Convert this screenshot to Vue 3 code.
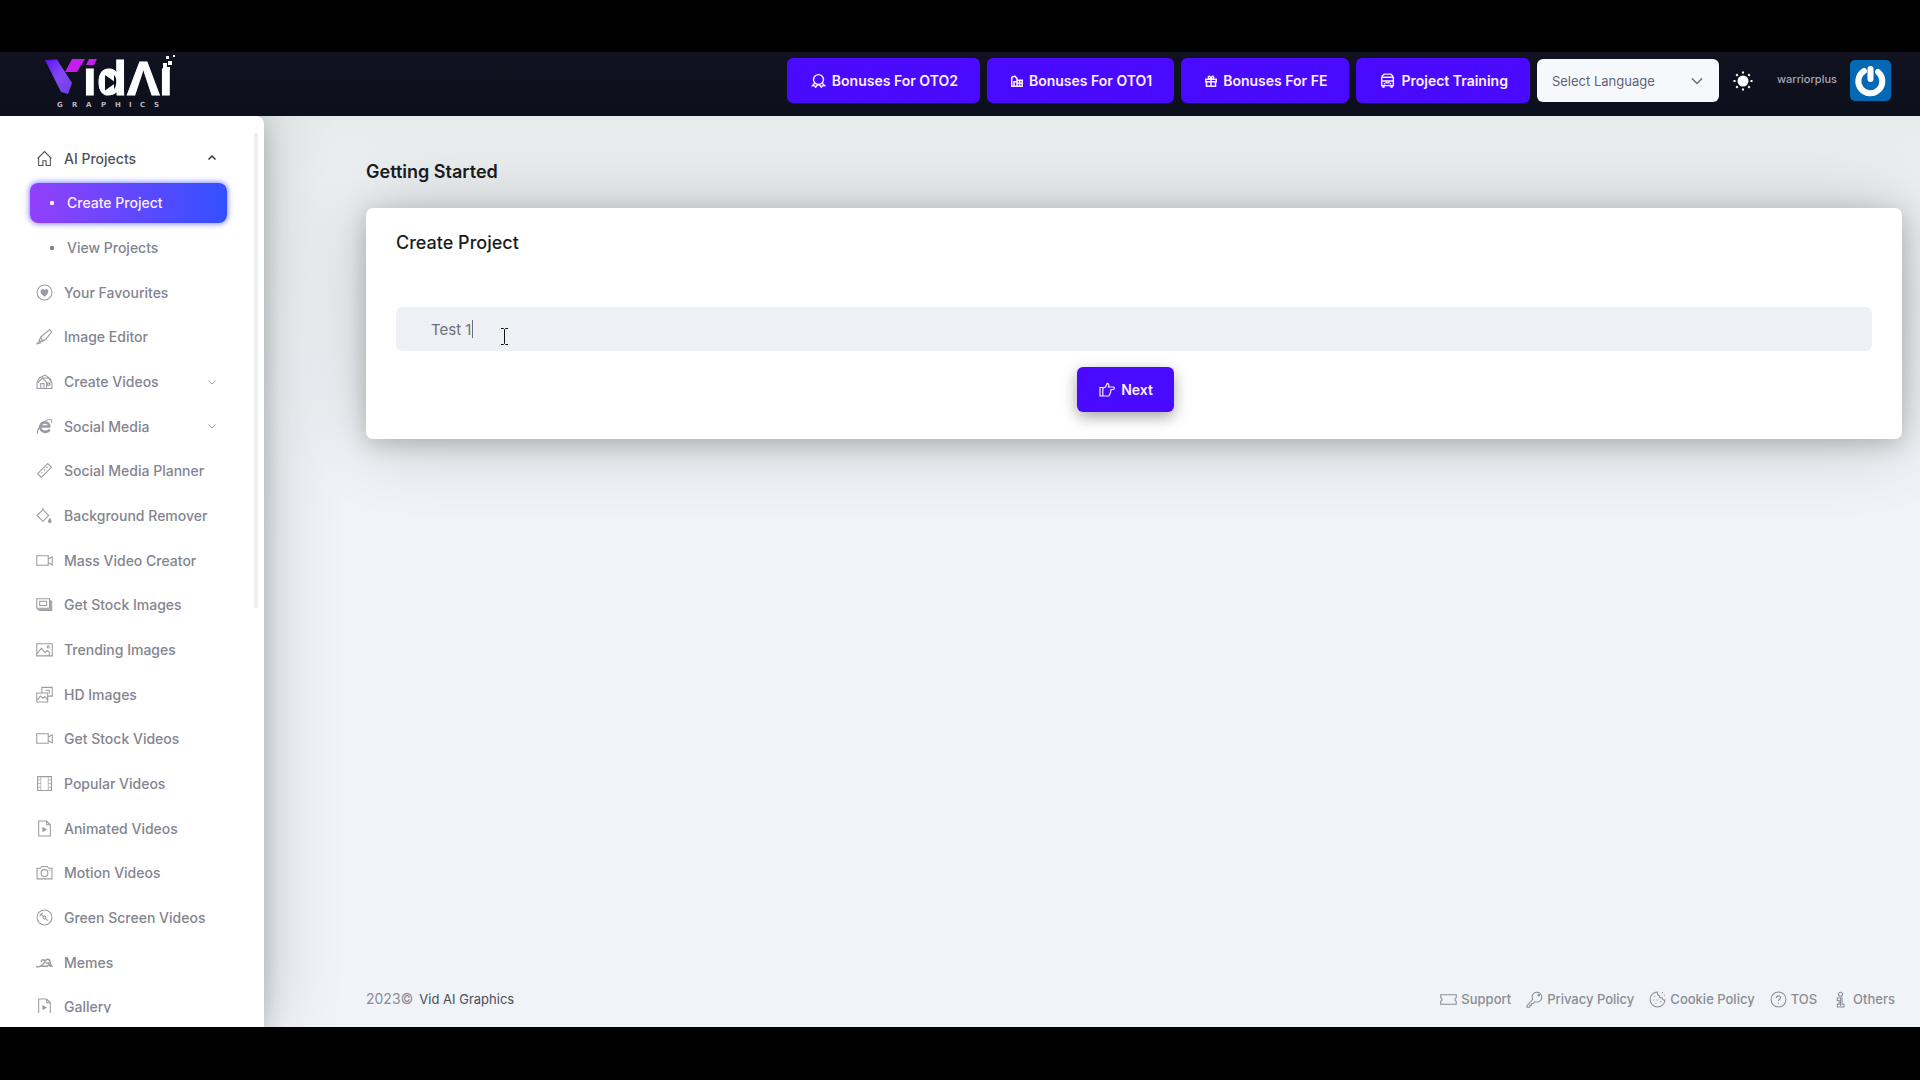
<script setup>
import { ref } from 'vue';

const projectName = ref('Test 1');
const language = ref('');

const icons = {
  house: '<path d="M1.5 8 8 1.5 14.5 8M2.5 7.2v7.3h4v-4.3h3v4.3h4V7.2"/>',
  heart: '<circle cx="8" cy="8" r="7"/><path class="fill" d="M8 12C2.5 8.5 4.3 4.8 6.3 4.8 7.3 4.8 8 5.8 8 5.8s.7-1 1.7-1C11.7 4.8 13.5 8.5 8 12z"/>',
  brush: '<path d="M13 1.5 14.8 3.5 9 11 5.5 11.5 4.5 8.5zM4.5 8.5 3 11.5 5 13 8 11.5M3.5 12 1 14.8 4 14.2z"/>',
  houses: '<path d="M1 14.5V8.5L3.5 4.5 8.5 2l5 3.5 1.5 4v5zM2 9l4-4.5L10 9v5.5M4.5 14V10h3v4M6 4.5l6 .5 2.5 4M11 9.5h2v2h-2z"/>',
  browser: '<path stroke-width="2.4" d="M13 11C9.5 15 3.5 12.5 4 8 4.8 2.8 12.5 3 12.5 8H5"/><path d="M2 14.5C-1 13 7 1 14 1.5c1.2.4 1 2 .5 3"/>',
  ruler: '<path d="M11 1.5 14.5 5 5 14.5 1.5 11zM10 4.5l1 1M7.5 7l1 1M5 9.5l1 1"/>',
  bucket: '<path d="M6.5 2.5 12 8l-5.5 5.5L1 8zM6.5 2.5V1"/><path class="fill" d="M13 10c1 1.5 1.7 2.5 1.7 3.5a1.7 1.7 0 0 1-3.4 0c0-1 .7-2 1.7-3.5z"/>',
  video: '<path d="M.7 3.5h10.8v9H.7zM11.5 6.5l3.8-2v7.5l-3.8-2"/>',
  stack: '<path d="M.7 2.5h12v9h-12zM3.5 5h6.5v4H3.5zM2.5 13.5h12.3V4.5"/><path d="M1 12.5h12.8V3.5"/>',
  image: '<path d="M.7 2.5h14.6v11.5H.7zM1 12l4-5 3.5 4 2-2 2 1.5v3"/><circle cx="11.5" cy="5.5" r="1"/>',
  images: '<path d="M.7 6.5h10.3v8.5H.7zM1.5 13l2.5-3.5 2.5 2 2-1.5 2 2.5M5.5 6.5V1.3h9.8v8.2H11"/><path d="M9 4h3.5v3"/>',
  film: '<path d="M1.5 1.5h13v13h-13z"/><path stroke-width=".6" d="M4.5 1.5v13M11.5 1.5v13M1.5 4.5h3M1.5 8h3M1.5 11.5h3M11.5 4.5h3M11.5 8h3M11.5 11.5h3"/>',
  filePlay: '<path d="M2.5 1h7.5l3.5 3.5V15h-11zM10 1v3.5h3.5"/><path class="fill" d="M6 6.5 10.5 9 6 11.5z"/>',
  camera: '<path d="M1 4h3l1.5-1.7h5L12 4h3v10H1z"/><circle cx="8" cy="8.5" r="3.2"/><path d="M12.5 6h1"/>',
  disc: '<circle cx="8" cy="8" r="7"/><circle cx="8" cy="8" r="1.3"/><path d="M3.5 7A4.5 4.5 0 0 1 6.5 3.7M5 5l2 2M9 9l2 2"/>',
  people: '<path stroke-width="1.4" d="M0 11.5c2 1.5 3 .5 5-.5M5 7.5c0-3 4-2.5 3.5 0-.5 1.5-3 2-3.5 4h5M9 7c0-3 4-2.5 4 0 0 2 .5 3 2.5 5M9.5 8.5h3M10 12l2-2 2 2"/>',
  award: '<circle cx="8" cy="7" r="5.3"/><path d="M4 11 1.5 13.5l2.5.2L5 15.2l2-2.5h2l2 2.5 1-1.5 2.5-.2L12 11"/>',
  building: '<path d="M1 15V3l4-1.5L8 4.5V7h7v8zM4 15V9h4M8 7v8M8 11h7M11.5 7.5v7"/>',
  gift: '<path d="M1 5.5h14V9H1zM2 9v6h12V9M8 5.5v9.5M8 5.5C4 5.5 3.5 1.5 6 1.5c1.5.3 2 4 2 4s.5-3.7 2-4c2.5 0 2 4-2 4"/>',
  train: '<path d="M4.5 1.2h7L13.5 3l.7 2v8.5H1.8V5l.7-2zM2 4.5h12M2 8.5h12M6.5 8.5v2h3v-2M4 11.5h1.5M10.5 11.5H12M3 13.5V15h2M13 13.5V15h-2"/>',
  hand: '<path d="M1 5.5h2.8v8.5H1zM3.8 6.2 6.5 5 8 1.5c1.8-.4 2.2 1.5 1.5 3.5h5c1.2.3 1 2.2-.2 2.5H12l-.3 2.2-.8 2.2-1 2.1H3.8"/>',
  ticket: '<path d="M.7 3.5h14.6v2.8a1.8 1.8 0 0 0 0 3.4v2.8H.7V9.7a1.8 1.8 0 0 0 0-3.4z"/>',
  key: '<path d="M6.3 8A4.6 4.6 0 1 1 8.5 10L6.5 12H5v1.5H3.5v1.8H1V13.5z"/><circle cx="12" cy="4" r=".7"/>',
  cookie: '<path d="M8 1a7 7 0 1 0 7 7.5c-1.5.3-2.5-.5-2.5-2C10.5 7 9.5 5.5 10 4.5 8.5 4.5 7.5 2.5 8 1z"/><path d="M5 5h1M4 8.5h1M7 8.5h1M6 11.5h1M10.5 10h1M12 1.5h1M14 4h1"/>',
  question: '<circle cx="8" cy="8" r="7"/><path d="M6 6.5c0-2.5 4-2.5 4-.2C10 7.8 8 7.7 8 9.5M8 11v1"/>',
  info: '<circle cx="8" cy="3" r="1.9"/><path d="M5 6.5h4.5v6h1.7V15H5v-2.5h1.7V9H5zM8 7v7"/>',
};

const topButtons = [
  { label: 'Bonuses For OTO2', icon: 'award' },
  { label: 'Bonuses For OTO1', icon: 'building', small: true },
  { label: 'Bonuses For FE', icon: 'gift', small: true },
  { label: 'Project Training', icon: 'train' },
];

const menu = [
  { label: 'AI Projects', icon: 'house', open: true, arrow: true },
  { label: 'Create Project', sub: true, active: true },
  { label: 'View Projects', sub: true },
  { label: 'Your Favourites', icon: 'heart' },
  { label: 'Image Editor', icon: 'brush' },
  { label: 'Create Videos', icon: 'houses', arrow: true },
  { label: 'Social Media', icon: 'browser', arrow: true },
  { label: 'Social Media Planner', icon: 'ruler' },
  { label: 'Background Remover', icon: 'bucket' },
  { label: 'Mass Video Creator', icon: 'video' },
  { label: 'Get Stock Images', icon: 'stack' },
  { label: 'Trending Images', icon: 'image' },
  { label: 'HD Images', icon: 'images' },
  { label: 'Get Stock Videos', icon: 'video' },
  { label: 'Popular Videos', icon: 'film' },
  { label: 'Animated Videos', icon: 'filePlay' },
  { label: 'Motion Videos', icon: 'camera' },
  { label: 'Green Screen Videos', icon: 'disc' },
  { label: 'Memes', icon: 'people' },
  { label: 'Gallery', icon: 'filePlay' },
];

const footerLinks = [
  { label: 'Support', icon: 'ticket' },
  { label: 'Privacy Policy', icon: 'key' },
  { label: 'Cookie Policy', icon: 'cookie' },
  { label: 'TOS', icon: 'question' },
  { label: 'Others', icon: 'info' },
];
</script>

<template>
  <div class="page">
    <header class="topbar">
      <a href="#" class="logo" aria-label="VidAi Graphics">
        <svg viewBox="44 54 134 56">
          <defs>
            <linearGradient id="mark" x1="0" y1="0" x2="1" y2="1">
              <stop offset="0" stop-color="#5a12f5" />
              <stop offset="0.5" stop-color="#8448f2" />
              <stop offset="1" stop-color="#6a3fe8" />
            </linearGradient>
          </defs>
          <path fill="url(#mark)" d="M45 60 57 59.5 65 72 72 83 68 94 61 92z" />
          <path fill="#c41df0" d="M72 59h13l-8 13H65z" />
          <path fill="#c41df0" d="M89 59h8l-3 6h-8z" />
          <g class="logo-word">
            <text x="83" y="95">ı</text>
            <text x="97" y="95">d</text>
            <text x="127" y="95">Λ</text>
            <text x="159" y="95">ı</text>
          </g>
          <path fill="#fff" d="M103 74h11v18h-11z" />
          <path fill="#10101f" d="M105 75l11 7.7-11 7.7z" />
          <path fill="#fff" d="M163 63h4v4h3v3h-7zM168 61h4v4h-4zM166 56h3v3h-3zM173 55h2v2h-2z" />
          <text class="logo-sub" y="107" x="57 72 86 101 115 129 140 154">GRAPHICS</text>
        </svg>
      </a>
      <div class="tools">
        <button v-for="b in topButtons" :key="b.label" type="button" class="btn" :class="{ small: b.small }">
          <svg class="icon" viewBox="0 0 16 16" v-html="icons[b.icon]"></svg>
          {{ b.label }}
        </button>
        <div class="language">
          <select v-model="language" aria-label="Select Language">
            <option value="">Select Language</option>
          </select>
          <svg class="chevron" viewBox="0 0 12 12"><path d="M1 3.5 6 8.5 11 3.5" /></svg>
        </div>
        <button type="button" class="theme" aria-label="Theme">
          <svg viewBox="0 0 20 20">
            <circle cx="10" cy="10" r="5.5" />
            <g class="rays">
              <path d="M10 .5v2M10 17.5v2M.5 10h2M17.5 10h2M3.3 3.3l1.4 1.4M15.3 15.3l1.4 1.4M3.3 16.7l1.4-1.4M15.3 4.7l1.4-1.4" />
            </g>
          </svg>
        </button>
        <span class="user">warriorplus</span>
        <a href="#" class="avatar" aria-label="Profile">
          <svg viewBox="0 0 41 41">
            <path d="M14 11a12 12 0 1 0 14 1M20.5 9v10" />
          </svg>
        </a>
      </div>
    </header>

    <div class="body">
      <aside class="sidebar">
        <nav class="scroll">
          <ul class="menu">
            <li v-for="item in menu" :key="item.label">
              <a href="#" :class="{ sub: item.sub, active: item.active, open: item.open }">
                <span v-if="item.sub" class="bullet"></span>
                <svg v-else class="icon" viewBox="0 0 16 16" v-html="icons[item.icon]"></svg>
                <span class="label">{{ item.label }}</span>
                <svg v-if="item.arrow" class="arrow" viewBox="0 0 12 12"><path d="M2.5 4.5 6 8 9.5 4.5" /></svg>
              </a>
            </li>
          </ul>
        </nav>
        <div class="scrollbar"></div>
      </aside>

      <main class="main">
        <h1>Getting Started</h1>
        <section class="card">
          <h2>Create Project</h2>
          <form @submit.prevent>
            <div class="field">
              <input v-model="projectName" type="text" aria-label="Project name" />
              <span class="caret"></span>
              <svg class="ibeam" viewBox="0 0 9 17"><path d="M1 .5h2.5l1 1 1-1H8M4.5 1.5v14M1 16.5h2.5l1-1 1 1H8" /></svg>
            </div>
            <div class="actions">
              <button type="submit" class="btn next">
                <svg class="icon" viewBox="0 0 16 16" v-html="icons.hand"></svg>
                Next
              </button>
            </div>
          </form>
        </section>

        <footer class="footer">
          <p><span>2023©</span> <a href="#">Vid AI Graphics</a></p>
          <ul>
            <li v-for="link in footerLinks" :key="link.label">
              <a href="#">
                <svg class="icon" viewBox="0 0 16 16" v-html="icons[link.icon]"></svg>
                {{ link.label }}
              </a>
            </li>
          </ul>
        </footer>
      </main>
    </div>
  </div>
</template>

<style>
body {
  margin: 0;
  background: #000;
}
.icon {
  flex: none;
  fill: none;
  stroke: currentColor;
  stroke-width: 1;
}
.icon .fill {
  fill: currentColor;
  stroke: none;
}
</style>

<style scoped>
.page {
  box-sizing: border-box;
  display: flex;
  flex-direction: column;
  height: 100vh;
  padding: 52px 0 53px;
  background: #000;
  font-family: Inter, 'Liberation Sans', sans-serif;
}
ul {
  list-style: none;
  margin: 0;
  padding: 0;
}
a {
  color: inherit;
  text-decoration: none;
}
button,
input,
select {
  font-family: inherit;
}

.topbar {
  display: flex;
  flex: none;
  justify-content: space-between;
  height: 64px;
  padding: 0 29px 0 44px;
  background: linear-gradient(#121221, #0c0f1c);
}
.logo svg {
  display: block;
  width: 134px;
  height: 56px;
  margin-top: 2px;
  overflow: visible;
}
.logo-word {
  fill: #fff;
  stroke: #fff;
  stroke-width: 1;
  font: bold 49px 'Liberation Sans', Arial, sans-serif;
}
.logo-sub {
  fill: #b9b9c4;
  font: bold 7px 'DejaVu Sans', sans-serif;
}
.tools {
  display: flex;
  align-items: center;
  gap: 7px;
  margin-bottom: 7px;
}
.btn {
  display: flex;
  align-items: center;
  gap: 6px;
  height: 45px;
  padding: 0 22px 0 24px;
  border: none;
  border-radius: 6px;
  background: #4a0aff;
  color: #fdeeff;
  font-size: 14px;
  font-weight: 600;
  white-space: nowrap;
  cursor: pointer;
}
.btn .icon {
  width: 15px;
  height: 15px;
  stroke-width: 1.5;
}
.small .icon {
  width: 12px;
  height: 12px;
  stroke-width: 2;
}
.language {
  position: relative;
}
.language select {
  appearance: none;
  width: 182px;
  height: 43px;
  padding: 0 40px 0 15px;
  border: none;
  border-radius: 6px;
  background: #f7f8fb;
  color: #5e6278;
  font-size: 13px;
}
.chevron {
  position: absolute;
  top: 16px;
  right: 16px;
  width: 12px;
  height: 12px;
  fill: none;
  stroke: #6b6b75;
  stroke-width: 1.5;
  pointer-events: none;
}
.theme {
  display: flex;
  margin: 0 17px 0 7px;
  padding: 0;
  border: none;
  background: none;
}
.theme svg {
  width: 20px;
  height: 20px;
  fill: #fff;
}
.rays {
  stroke: #fff;
  stroke-width: 2;
}
.user {
  padding-bottom: 4px;
  color: #a5a6b5;
  font-size: 11px;
  font-weight: 500;
  line-height: 16px;
}
.avatar {
  margin-left: 6px;
}
.avatar svg {
  display: block;
  width: 41px;
  height: 41px;
  border-radius: 5px;
  background: #0468b4;
  fill: none;
  stroke: #fff;
  stroke-width: 6;
  stroke-linecap: round;
}

.body {
  display: flex;
  flex: 1;
  min-height: 0;
  overflow: hidden;
  background: linear-gradient(#e6ebec, #ecf0f2 60px, #f0f3f8 420px);
}
.sidebar {
  position: relative;
  box-sizing: border-box;
  flex: none;
  width: 264px;
  padding: 17px 0 14px;
  border-top-right-radius: 8px;
  background: #fff;
  box-shadow: 0 0 80px rgba(0, 0, 0, 0.2), 0 5px 25px rgba(0, 0, 0, 0.2);
}
.scroll {
  height: 100%;
  overflow: hidden;
}
/* rows share the height evenly, the last one runs under the edge */
.menu {
  display: grid;
  grid-auto-rows: 1fr;
  align-items: center;
  height: calc(100% + 16px);
  padding: 3px 37px 0 30px;
  box-sizing: border-box;
}
.menu a {
  display: flex;
  align-items: center;
  box-sizing: border-box;
  height: 40px;
  padding: 0 9px 0 6px;
  border-radius: 8px;
  color: #83858f;
  font-size: 14px;
  font-weight: 500;
}
.menu .icon {
  width: 17px;
  height: 17px;
  margin-right: 11px;
  color: #9a9ca3;
}
.menu .label {
  flex: 1;
}
.menu .sub {
  padding-left: 20px;
}
.menu .open,
.menu .open .icon {
  color: #4f5259;
}
.menu .active {
  background: linear-gradient(90deg, #9240fb, #3350ff);
  box-shadow: 0 0 6px #5a63ff;
  color: #fdeeff;
}
.bullet {
  width: 4px;
  height: 4px;
  margin-right: 13px;
  border-radius: 1px;
  background: currentColor;
}
.arrow {
  width: 12px;
  height: 12px;
  fill: none;
  stroke: #9a9ca3;
  stroke-width: 1;
}
.open .arrow {
  stroke: #33363c;
  stroke-width: 1.5;
  transform: rotate(180deg);
}
.scrollbar {
  position: absolute;
  top: 17px;
  right: 6px;
  width: 4px;
  height: 475px;
  background: #eceef1;
}

.main {
  display: flex;
  flex: 1;
  flex-direction: column;
  padding: 43px 18px 17px 102px;
}
h1,
h2 {
  margin: 0;
  color: #181c22;
  font-size: 18px;
  font-weight: 600;
  line-height: 26px;
}
h2 {
  font-weight: 500;
}
.card {
  box-sizing: border-box;
  margin-top: 23px;
  padding: 22px 30px 27px;
  border-radius: 7px;
  background: #fff;
  box-shadow: 0 0 80px rgba(0, 0, 0, 0.2), 0 5px 25px rgba(0, 0, 0, 0.2);
}
.field {
  position: relative;
  margin-top: 51px;
}
.field input {
  display: block;
  box-sizing: border-box;
  width: 100%;
  height: 44px;
  padding: 0 35px;
  border: none;
  border-radius: 6px;
  background: #eef0f5;
  color: #6d7078;
  font-size: 15px;
}
.caret {
  position: absolute;
  top: 13px;
  left: 76px;
  width: 1px;
  height: 18px;
  background: #6d7078;
}
.ibeam {
  position: absolute;
  top: 21px;
  left: 104px;
  width: 9px;
  height: 17px;
  fill: none;
  stroke: #111;
  stroke-width: 1;
}
.actions {
  display: flex;
  justify-content: center;
  margin-top: 16px;
  padding-right: 17px;
}
.next {
  padding: 0 21px 0 22px;
  box-shadow: 0 5px 15px rgba(0, 0, 0, 0.35);
}
.next .icon {
  width: 16px;
  height: 16px;
  stroke-width: 1.2;
}

.footer {
  display: flex;
  align-items: center;
  justify-content: space-between;
  margin-top: auto;
  padding-right: 7px;
  color: #8b8d96;
  font-size: 13px;
  line-height: 22px;
}
.footer p {
  display: flex;
  gap: 6px;
  margin: 0;
}
.footer p span {
  font-size: 14px;
}
.footer p a {
  color: #4a4e57;
}
.footer ul {
  display: flex;
  gap: 15px;
  font-weight: 500;
}
.footer li a {
  display: flex;
  align-items: center;
  gap: 4px;
}
.footer .icon {
  width: 17px;
  height: 17px;
}
</style>
